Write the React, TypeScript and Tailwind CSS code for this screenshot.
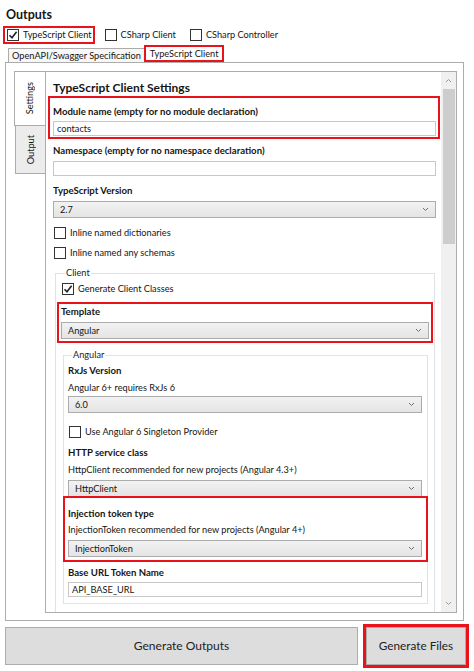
import type { ReactNode } from "react";

function CheckMark() {
  return (
    <svg width="10" height="10" viewBox="0 0 10 10" className="block">
      <path d="M1.5 5.2 L4 7.8 L8.6 1.8" fill="none" stroke="#222" strokeWidth="1.6" />
    </svg>
  );
}

function Check({ label, checked = false, className = "" }: { label: string; checked?: boolean; className?: string }) {
  return (
    <div className={`flex h-4 items-center ${className}`}>
      <span className="flex h-[12px] w-[12px] items-center justify-center border border-[#333] bg-white">
        {checked ? <CheckMark /> : null}
      </span>
      <span className="ml-[4px] leading-4">{label}</span>
    </div>
  );
}

function Select({ value, className = "" }: { value: string; className?: string }) {
  return (
    <div
      className={`flex h-[17px] items-center justify-between border border-[#acacac] bg-gradient-to-b from-[#f2f2f2] to-[#e4e4e4] pl-[6px] pr-[6px] ${className}`}
    >
      <span className="leading-4">{value}</span>
      <svg width="7" height="5" viewBox="0 0 7 5">
        <path d="M1 1 L3.5 3.5 L6 1" fill="none" stroke="#707070" strokeWidth="1" />
      </svg>
    </div>
  );
}

function TextBox({ value = "", className = "" }: { value?: string; className?: string }) {
  return (
    <div className={`flex h-[15px] items-center border border-[#c8c8c8] bg-white pl-[3px] ${className}`}>
      <span className="leading-4">{value}</span>
    </div>
  );
}

function Mark({ children, inset, className = "" }: { children: ReactNode; inset: string; className?: string }) {
  return (
    <div className={`relative ${className}`}>
      <span className={`pointer-events-none absolute border-2 border-[#e8131b] ${inset}`} />
      {children}
    </div>
  );
}

function Label({ children, className = "" }: { children: ReactNode; className?: string }) {
  return <div className={`text-[9.6px] font-bold leading-4 ${className}`}>{children}</div>;
}

export default function App() {
  return (
    <div className="h-[671px] w-[474px] overflow-hidden bg-white font-['Lato',sans-serif] text-[9.2px] text-[#151515]">
      <div className="pl-[6px] pt-[5px] text-[12.5px] font-bold leading-[20px]">Outputs</div>

      <div className="mt-[2px] flex items-center pl-[7px]">
        <Mark inset="-left-[4px] -right-[3px] -top-[1px] -bottom-[1px]">
          <Check label="TypeScript Client" checked />
        </Mark>
        <Check label="CSharp Client" className="ml-[13px]" />
        <Check label="CSharp Controller" className="ml-[14px]" />
      </div>

      <div className="mt-[3px] flex h-[16px] items-end pl-[8px]">
        <div className="flex h-[14px] items-center border border-b-0 border-[#acacac] bg-[#f7f7f7] px-[3px] leading-4">
          OpenAPI/Swagger Specification
        </div>
        <Mark inset="-left-[1px] -right-[1px] -top-[1px] bottom-0">
          <div className="flex h-[16px] items-center bg-white px-[5px] leading-4">TypeScript Client</div>
        </Mark>
      </div>

      <div className="ml-[5px] flex h-[559px] w-[459px] border border-[#acacac] pl-[8px] pt-[8px]">
        <div className="flex w-[31px] flex-col">
          <div className="flex h-[55px] items-center justify-center border border-r-0 border-[#acacac] bg-white">
            <span className="rotate-180 leading-4 [writing-mode:vertical-rl]">Settings</span>
          </div>
          <div className="ml-[1px] flex h-[48px] items-center justify-center border border-r-0 border-t-0 border-[#acacac] bg-[#ececec]">
            <span className="rotate-180 leading-4 [writing-mode:vertical-rl]">Output</span>
          </div>
        </div>

        <div className="flex h-[542px] w-[412px] border border-[#acacac]">
          <div className="flex-1 overflow-hidden pl-[7px] pr-[5px]">
            <div className="mt-[7px] text-[12px] font-bold leading-[18px]">TypeScript Client Settings</div>

            <Mark inset="-left-[5px] -right-[4px] -top-[1px] -bottom-[3px]">
              <div className="pt-[7px]">
                <Label>Module name (empty for no module declaration)</Label>
                <TextBox value="contacts" className="mt-[1px]" />
              </div>
            </Mark>

            <Label className="mt-[7px]">Namespace (empty for no namespace declaration)</Label>
            <TextBox className="mt-[2px]" />

            <Label className="mt-[7px]">TypeScript Version</Label>
            <Select value="2.7" className="mt-[2px]" />

            <Check label="Inline named dictionaries" className="ml-[1px] mt-[7px]" />
            <Check label="Inline named any schemas" className="ml-[1px] mt-[4px]" />

            <fieldset className="ml-[2px] mr-[1px] mt-[4px] border border-[#dde3e7] px-[5px] pb-[6px]">
              <legend className="ml-[4px] px-[1px] leading-4 text-[#222]">Client</legend>
              <Check label="Generate Client Classes" checked className="ml-[1px]" />

              <Mark inset="-left-[4px] -right-[4px] -top-[1px] -bottom-[4px]" className="mt-[6px]">
                <div className="pt-[1px]">
                  <Label>Template</Label>
                  <Select value="Angular" className="mt-[2px]" />
                </div>
              </Mark>

              <fieldset className="ml-[2px] mr-[1px] mt-[8px] border border-[#dde3e7] pb-[6px] pl-[4px] pr-[5px]">
                <legend className="ml-[4px] px-[1px] leading-4 text-[#222]">Angular</legend>
                <Label>RxJs Version</Label>
                <div className="mt-[1px] leading-4">Angular 6+ requires RxJs 6</div>
                <Select value="6.0" className="mt-0" />

                <Check label="Use Angular 6 Singleton Provider" className="ml-[1px] mt-[11px]" />

                <Label className="mt-[5px]">HTTP service class</Label>
                <div className="mt-[1px] leading-4">HttpClient recommended for new projects (Angular 4.3+)</div>
                <Select value="HttpClient" className="mt-[2px]" />

                <Mark inset="-left-[5px] -right-[6px] -top-[1px] -bottom-[5px]">
                  <div className="pt-[9px]">
                    <Label>Injection token type</Label>
                    <div className="leading-4">InjectionToken recommended for new projects (Angular 4+)</div>
                    <Select value="InjectionToken" className="mt-[2px]" />
                  </div>
                </Mark>

                <Label className="mt-[8px]">Base URL Token Name</Label>
                <TextBox value="API_BASE_URL" className="mt-[1px]" />
              </fieldset>
              <div className="h-[20px]" />
            </fieldset>
          </div>

          <div className="flex w-[15px] flex-col items-center bg-[#f0f0f0]">
            <svg width="7" height="5" viewBox="0 0 7 5" className="mt-[6px]">
              <path d="M1 4 L3.5 1.5 L6 4" fill="none" stroke="#9a9a9a" strokeWidth="1" />
            </svg>
            <div className="mt-[6px] h-[155px] w-[12px] bg-[#cdcdcd]" />
            <div className="flex-1" />
            <svg width="7" height="5" viewBox="0 0 7 5" className="mb-[6px]">
              <path d="M1 1 L3.5 3.5 L6 1" fill="none" stroke="#9a9a9a" strokeWidth="1" />
            </svg>
          </div>
        </div>
      </div>

      <div className="mt-[6px] flex items-center pl-[5px]">
        <button className="h-[38px] w-[353px] border border-[#adadad] bg-[#dddddd] text-[12px] text-[#222]">
          Generate Outputs
        </button>
        <button className="ml-[8px] h-[38px] w-[100px] border border-[#adadad] bg-[#dddddd] text-[11.75px] text-[#222] outline-[3px] outline-offset-0 outline-[#e8131b] outline-solid">
          Generate Files
        </button>
      </div>
    </div>
  );
}
